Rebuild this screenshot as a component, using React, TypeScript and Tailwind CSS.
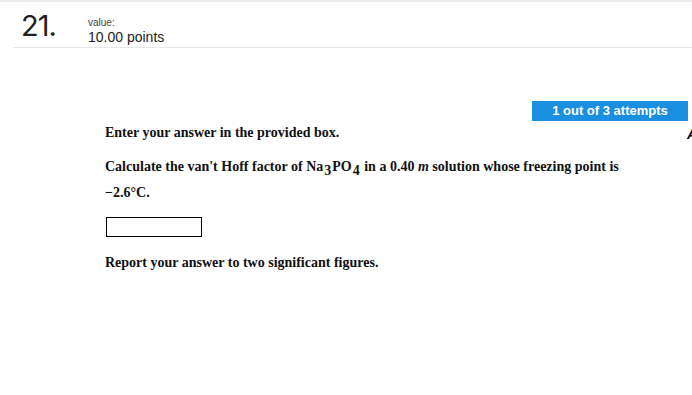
export default function App() {
  return (
    <div className="w-[692px] h-[395px] bg-white overflow-hidden relative">
      <div className="h-[2px] bg-[#ececec]" />
      <div className="ml-[13px] flex items-start h-[46px] border-b border-[#e6e6e6]">
        <div className="w-[75px] pl-[8px] pt-[9px] text-[29px] leading-[30px] text-[#222] font-['Inter',sans-serif] tracking-[-1px]">
          21.
        </div>
        <div className="pt-[15px] font-['Liberation_Sans',sans-serif] text-[#222]">
          <div className="text-[10px] leading-[12px] text-[#444]">value:</div>
          <div className="text-[14px] leading-[16px]">10.00 points</div>
        </div>
      </div>

      <div className="pt-[53px] flex justify-end pr-[4px]">
        <div className="w-[156px] h-[20px] bg-[#1a8fe0] text-white font-['Liberation_Sans',sans-serif] font-bold text-[13px] leading-[20px] text-center">
          1 out of 3 attempts
        </div>
      </div>
      <div className="absolute left-[687px] top-[124px] font-['Liberation_Sans',sans-serif] font-bold italic text-[14px] text-black">
        A
      </div>

      <div className="pl-[105px] pt-[2px] font-['Liberation_Serif',serif] font-bold text-[14px] text-[#111]">
        <p className="leading-[20px]">Enter your answer in the provided box.</p>
        <p className="mt-[14px] leading-[20px]">
          Calculate the van't Hoff factor of Na
          <span className="relative top-[4px] ml-[1px] mr-[1px] text-[14px] leading-none">3</span>PO
          <span className="relative top-[4px] ml-[1px] mr-[1px] text-[14px] leading-none">4</span> in a 0.40{" "}
          <i>m</i> solution whose freezing point is
        </p>
        <p className="mt-[6px] leading-[20px]">&minus;2.6°C.</p>
        <div className="mt-[14px] ml-[1px] w-[96px] h-[20px] border border-black" />
        <p className="mt-[16px] leading-[20px]">Report your answer to two significant figures.</p>
      </div>
    </div>
  );
}
